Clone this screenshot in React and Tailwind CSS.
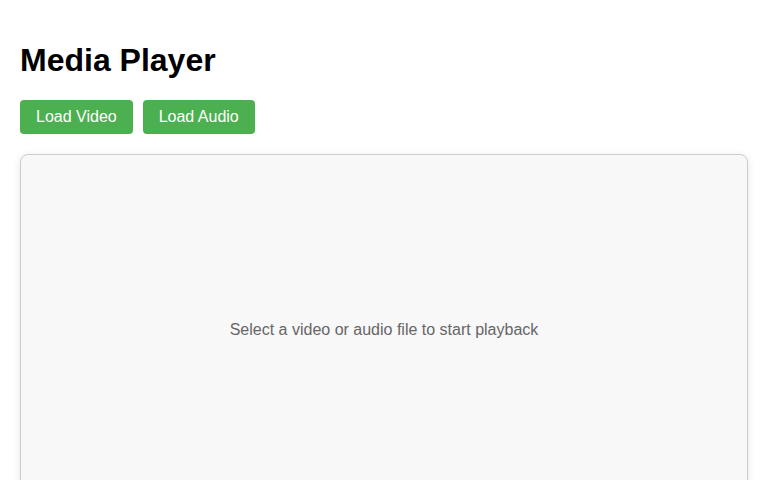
import React from "react";

export default function App() {
  return (
    <div className="min-h-screen bg-white p-5 font-['Liberation_Sans',Arial,sans-serif] text-black">
      {/* Heading */}
      <h1 className="mt-[22px] mb-[21px] text-[32px] font-bold leading-[37px]">
        Media Player
      </h1>

      {/* Load buttons */}
      <div className="flex gap-[10px]">
        <button className="rounded bg-[#4caf50] px-4 py-2 text-base leading-[18px] text-white">
          Load Video
        </button>
        <button className="rounded bg-[#4caf50] px-4 py-2 text-base leading-[18px] text-white">
          Load Audio
        </button>
      </div>

      {/* Player area */}
      <div className="mt-5 flex h-[352px] items-center justify-center rounded-lg border border-[#ccc] bg-[#f8f8f8] shadow-[0_2px_8px_rgba(0,0,0,0.1)]">
        <p className="text-base text-[#666]">
          Select a video or audio file to start playback
        </p>
      </div>
    </div>
  );
}
